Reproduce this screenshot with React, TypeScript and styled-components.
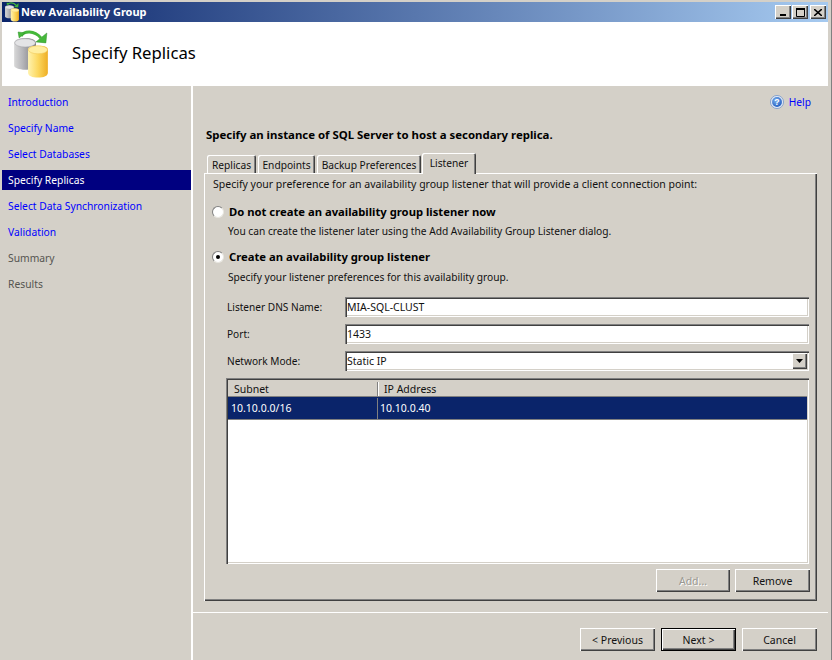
import React from "react";
import styled, { createGlobalStyle, css } from "styled-components";

const Global = createGlobalStyle`
  html, body { margin: 0; padding: 0; background: #d4d0c8; }
  * { box-sizing: border-box; }
`;

const FONT = `"Noto Sans", "Liberation Sans", Arial, sans-serif`;
const FACE = "#d4d0c8";

const raised = css`
  background: ${FACE};
  box-shadow: inset 1px 1px 0 #fff, inset -1px -1px 0 #404040, inset -2px -2px 0 #808080;
`;
const sunken = css`
  background: #fff;
  box-shadow: inset 1px 1px 0 #808080, inset 2px 2px 0 #404040, inset -1px -1px 0 #fff, inset -2px -2px 0 ${FACE};
`;

const Win = styled.div`
  width: 832px;
  height: 660px;
  padding: 2px 4px 0 2px;
  background: ${FACE};
  font: 400 10.5px/13px ${FONT};
  color: #111;
  display: flex;
  flex-direction: column;
  overflow: hidden;
  box-shadow: inset -1px 0 0 #808080, inset -2px 0 0 #d4d0c8;
`;
const TitleBar = styled.div`
  height: 20px;
  flex: none;
  display: flex;
  align-items: center;
  padding: 0 2px 0 3px;
  background: linear-gradient(90deg, #0a246a 0%, #a6caf0 100%);
`;
const TitleText = styled.span`
  color: #fff;
  font: 700 11px/14px ${FONT};
  margin-left: 2px;
  flex: 1;
`;
const CtlButton = styled.div<{ $gap?: number }>`
  ${raised};
  width: 16px;
  height: 14px;
  margin-left: ${(p) => p.$gap ?? 1}px;
  display: flex;
  align-items: center;
  justify-content: center;
`;
const Head = styled.div`
  height: 64px;
  flex: none;
  background: #fff;
  display: flex;
  align-items: center;
  padding-left: 12px;
`;
const HeadTitle = styled.h1`
  margin: 0 0 2px 24px;
  font: 400 16.7px/20px ${FONT};
  color: #000;
`;
const Body = styled.div`
  flex: 1;
  display: flex;
  min-height: 0;
`;
const Sidebar = styled.nav`
  width: 189px;
  flex: none;
  padding-top: 3px;
`;
const NavItem = styled.div<{ $state: "link" | "current" | "off" }>`
  height: 20px;
  margin: 3px 0 6px;
  padding-left: 6px;
  display: flex;
  align-items: center;
  font-size: 10.3px;
  color: ${(p) => (p.$state === "link" ? "#0000ff" : p.$state === "off" ? "#555550" : "#fff")};
  background: ${(p) => (p.$state === "current" ? "#000080" : "transparent")};
`;
const Main = styled.main`
  flex: 1;
  display: flex;
  flex-direction: column;
  border-left: 2px solid #fff;
  min-width: 0;
`;
const HelpRow = styled.div`
  height: 32px;
  display: flex;
  justify-content: flex-end;
  align-items: center;
  gap: 5px;
  padding-right: 17px;
  color: #0000ff;
  font-size: 10.2px;
  flex: none;
`;
const Instruction = styled.div`
  font: 700 11.4px/14px ${FONT};
  color: #000;
  margin: 10px 0 0 13px;
  height: 25px;
  flex: none;
`;
const Tabs = styled.div`
  display: flex;
  align-items: flex-end;
  height: 20px;
  margin-left: 14px;
  gap: 2px;
  flex: none;
  position: relative;
  z-index: 1;
`;
const Tab = styled.div<{ $active?: boolean; $w: number }>`
  width: ${(p) => p.$w}px;
  height: ${(p) => (p.$active ? 21 : 18)}px;
  margin-left: ${(p) => (p.$active ? -1 : 0)}px;
  margin-bottom: ${(p) => (p.$active ? -1 : 0)}px;
  padding-top: 4px;
  font-size: 10.2px;
  text-align: center;
  background: ${FACE};
  border-radius: 2px 2px 0 0;
  box-shadow: inset 1px 1px 0 #fff, inset -1px 0 0 #404040, inset -2px 0 0 #808080;
`;
const Pane = styled.div`
  width: 613px;
  height: 428px;
  margin-left: 11px;
  flex: none;
  padding: 5px 7px 0 9px;
  background: ${FACE};
  box-shadow: inset 1px 1px 0 #fff, inset -1px -1px 0 #404040, inset -2px -2px 0 #808080;
`;
const Lead = styled.div`
  height: 13px;
`;
const RadioRow = styled.div<{ $top: number }>`
  display: flex;
  align-items: center;
  height: 16px;
  margin: ${(p) => p.$top}px 0 0 -1px;
  gap: 5px;
  font: 700 11.25px/14px ${FONT};
  color: #000;
`;
const Radio = styled.span<{ $on?: boolean }>`
  width: 12px;
  height: 12px;
  border-radius: 50%;
  background: #fff;
  border: 1px solid #808080;
  border-right-color: #e8e6e0;
  border-bottom-color: #e8e6e0;
  display: flex;
  align-items: center;
  justify-content: center;
  &::after {
    content: "";
    width: 4px;
    height: 4px;
    border-radius: 50%;
    background: ${(p) => (p.$on ? "#000" : "transparent")};
  }
`;
const Hint = styled.div<{ $top: number }>`
  margin: ${(p) => p.$top}px 0 0 15px;
  height: 13px;
  font-size: 10.2px;
`;
const Field = styled.div<{ $top: number }>`
  display: flex;
  align-items: center;
  height: 20px;
  margin: ${(p) => p.$top}px 0 0 14px;
`;
const FieldLabel = styled.div`
  width: 118px;
  flex: none;
  font-size: 10.1px;
`;
const Input = styled.div`
  ${sunken};
  width: 464px;
  height: 20px;
  padding: 0 2px;
  flex: none;
  display: flex;
  align-items: center;
  color: #111;
  position: relative;
`;
const Arrow = styled.div`
  ${raised};
  position: absolute;
  right: 2px;
  top: 2px;
  width: 15px;
  height: 16px;
  display: flex;
  align-items: center;
  justify-content: center;
`;
const List = styled.div`
  ${sunken};
  width: 583px;
  height: 186px;
  margin: 7px 0 0 13px;
  padding: 2px;
`;
const ColHead = styled.div`
  display: grid;
  grid-template-columns: 149px 1fr;
  height: 17px;
  padding-top: 2px;
  background: ${FACE};
  border-bottom: 1px solid #808080;
`;
const ColCell = styled.div`
  padding-left: 6px;
  display: flex;
  align-items: center;
  & + & {
    border-left: 1px solid #808080;
    box-shadow: inset 1px 0 0 #fff;
  }
`;
const SelRow = styled.div`
  display: grid;
  grid-template-columns: 149px 1fr;
  height: 23px;
  padding-top: 1px;
  background: #0a246a;
  color: #fff;
  border-bottom: 1px solid #808080;
`;
const SelCell = styled.div`
  padding-left: 3px;
  display: flex;
  align-items: center;
  & + & {
    border-left: 1px solid #808080;
    padding-left: 2px;
  }
`;
const Buttons = styled.div`
  display: flex;
  justify-content: flex-end;
  gap: 5px;
  margin: 5px 0 0;
`;
const Btn = styled.div<{ $w?: number; $disabled?: boolean; $default?: boolean }>`
  ${raised};
  width: ${(p) => p.$w ?? 75}px;
  height: 23px;
  padding-top: 1px;
  display: flex;
  align-items: center;
  justify-content: center;
  color: ${(p) => (p.$disabled ? "#9a9892" : "#111")};
  ${(p) =>
    p.$disabled &&
    css`
      text-shadow: 1px 1px 0 #fff;
    `}
  ${(p) =>
    p.$default &&
    css`
      box-shadow: inset 0 0 0 1px #000, inset 2px 2px 0 #fff, inset -2px -2px 0 #404040, inset -3px -3px 0 #808080;
    `}
`;
const Footer = styled.div`
  margin-top: 11px;
  border-top: 1px solid #fff;
  flex: 1;
  display: flex;
  justify-content: flex-end;
  gap: 6px;
  padding: 15px 11px 0 0;
`;

const DbIcon = ({ size }: { size: number }) => (
  <svg width={size} height={size * 1.4} viewBox="0 0 34 48" style={{ flex: "none" }}>
    <defs>
      <linearGradient id="gr" x1="0" x2="1" y1="0" y2="0">
        <stop offset="0" stopColor="#d8d8d8" />
        <stop offset="0.4" stopColor="#b4b4b8" />
        <stop offset="1" stopColor="#77777c" />
      </linearGradient>
      <linearGradient id="ye" x1="0" x2="1" y1="0" y2="0">
        <stop offset="0" stopColor="#fff3b0" />
        <stop offset="0.5" stopColor="#fcd860" />
        <stop offset="1" stopColor="#eeae24" />
      </linearGradient>
    </defs>
    <path d="M0 13c0-3 5-5 11-5s11 2 11 5v23c0 2-5 4-11 4S0 38 0 36z" fill="url(#gr)" />
    <ellipse cx="11" cy="13" rx="10.5" ry="4.2" fill="#e4e4e6" stroke="#a0a0a4" strokeWidth=".5" />
    <path d="M14 20c0-3 4-4 10-4s10 1 10 4v23c0 3-4 5-10 5s-10-2-10-5z" fill="url(#ye)" />
    <ellipse cx="24" cy="20" rx="9.7" ry="4" fill="#ffeea0" stroke="#efc250" strokeWidth=".5" />
    <path d="M7 6C10 1 20 0 27 8" fill="none" stroke="#45b83a" strokeWidth="3" />
    <path d="M33 3l-1 10-10-1z" fill="#45b83a" stroke="#2d8f28" strokeWidth=".5" />
    <path d="M5 8L4 2l7 1z" fill="#45b83a" stroke="#2d8f28" strokeWidth=".5" />
  </svg>
);

const HelpIcon = () => (
  <svg width="14" height="14" viewBox="0 0 16 16" style={{ flex: "none" }}>
    <defs>
      <radialGradient id="hb" cx="0.4" cy="0.35" r="0.7">
        <stop offset="0" stopColor="#7fb2ee" />
        <stop offset="1" stopColor="#1f5cc0" />
      </radialGradient>
    </defs>
    <circle cx="8" cy="8" r="7.5" fill="#dfe8f5" stroke="#7f9cc8" />
    <circle cx="8" cy="8" r="5.6" fill="url(#hb)" />
    <text x="8" y="11.5" textAnchor="middle" fontFamily="Liberation Sans" fontWeight="700" fontSize="10" fill="#fff">?</text>
  </svg>
);

const nav: [string, "link" | "current" | "off"][] = [
  ["Introduction", "link"],
  ["Specify Name", "link"],
  ["Select Databases", "link"],
  ["Specify Replicas", "current"],
  ["Select Data Synchronization", "link"],
  ["Validation", "link"],
  ["Summary", "off"],
  ["Results", "off"],
];

export default function App() {
  return (
    <Win>
      <Global />
      <TitleBar>
        <DbIcon size={14} />
        <TitleText>New Availability Group</TitleText>
        <CtlButton>
          <svg width="8" height="7" viewBox="0 0 8 7"><rect x="1" y="5" width="6" height="2" fill="#000" /></svg>
        </CtlButton>
        <CtlButton>
          <svg width="9" height="9" viewBox="0 0 9 9"><path d="M.5 1.5h8v7h-8z" fill="none" stroke="#000" /><rect width="9" height="2" fill="#000" /></svg>
        </CtlButton>
        <CtlButton $gap={2}>
          <svg width="8" height="7" viewBox="0 0 8 7"><path d="M0 0l8 7M8 0L0 7" stroke="#000" strokeWidth="1.6" /></svg>
        </CtlButton>
      </TitleBar>
      <Head>
        <DbIcon size={34} />
        <HeadTitle>Specify Replicas</HeadTitle>
      </Head>
      <Body>
        <Sidebar>
          {nav.map(([t, s]) => (
            <NavItem key={t} $state={s}>{t}</NavItem>
          ))}
        </Sidebar>
        <Main>
          <HelpRow>
            <HelpIcon />
            <span>Help</span>
          </HelpRow>
          <Instruction>Specify an instance of SQL Server to host a secondary replica.</Instruction>
          <Tabs>
            <Tab $w={49}>Replicas</Tab>
            <Tab $w={57}>Endpoints</Tab>
            <Tab $w={104}>Backup Preferences</Tab>
            <Tab $w={54} $active>Listener</Tab>
          </Tabs>
          <Pane>
            <Lead>Specify your preference for an availability group listener that will provide a client connection point:</Lead>
            <RadioRow $top={13}><Radio />Do not create an availability group listener now</RadioRow>
            <Hint $top={5}>You can create the listener later using the Add Availability Group Listener dialog.</Hint>
            <RadioRow $top={11}><Radio $on />Create an availability group listener</RadioRow>
            <Hint $top={6}>Specify your listener preferences for this availability group.</Hint>
            <Field $top={13}>
              <FieldLabel>Listener DNS Name:</FieldLabel>
              <Input>MIA-SQL-CLUST</Input>
            </Field>
            <Field $top={7}>
              <FieldLabel>Port:</FieldLabel>
              <Input>1433</Input>
            </Field>
            <Field $top={7}>
              <FieldLabel>Network Mode:</FieldLabel>
              <Input>
                Static IP
                <Arrow>
                  <svg width="7" height="4" viewBox="0 0 7 4"><path d="M0 0h7L3.5 4z" fill="#000" /></svg>
                </Arrow>
              </Input>
            </Field>
            <List>
              <ColHead>
                <ColCell>Subnet</ColCell>
                <ColCell>IP Address</ColCell>
              </ColHead>
              <SelRow>
                <SelCell>10.10.0.0/16</SelCell>
                <SelCell>10.10.0.40</SelCell>
              </SelRow>
            </List>
            <Buttons>
              <Btn $w={74} $disabled>Add...</Btn>
              <Btn>Remove</Btn>
            </Buttons>
          </Pane>
          <Footer>
            <Btn>&lt; Previous</Btn>
            <Btn $default>Next &gt;</Btn>
            <Btn>Cancel</Btn>
          </Footer>
        </Main>
      </Body>
    </Win>
  );
}
